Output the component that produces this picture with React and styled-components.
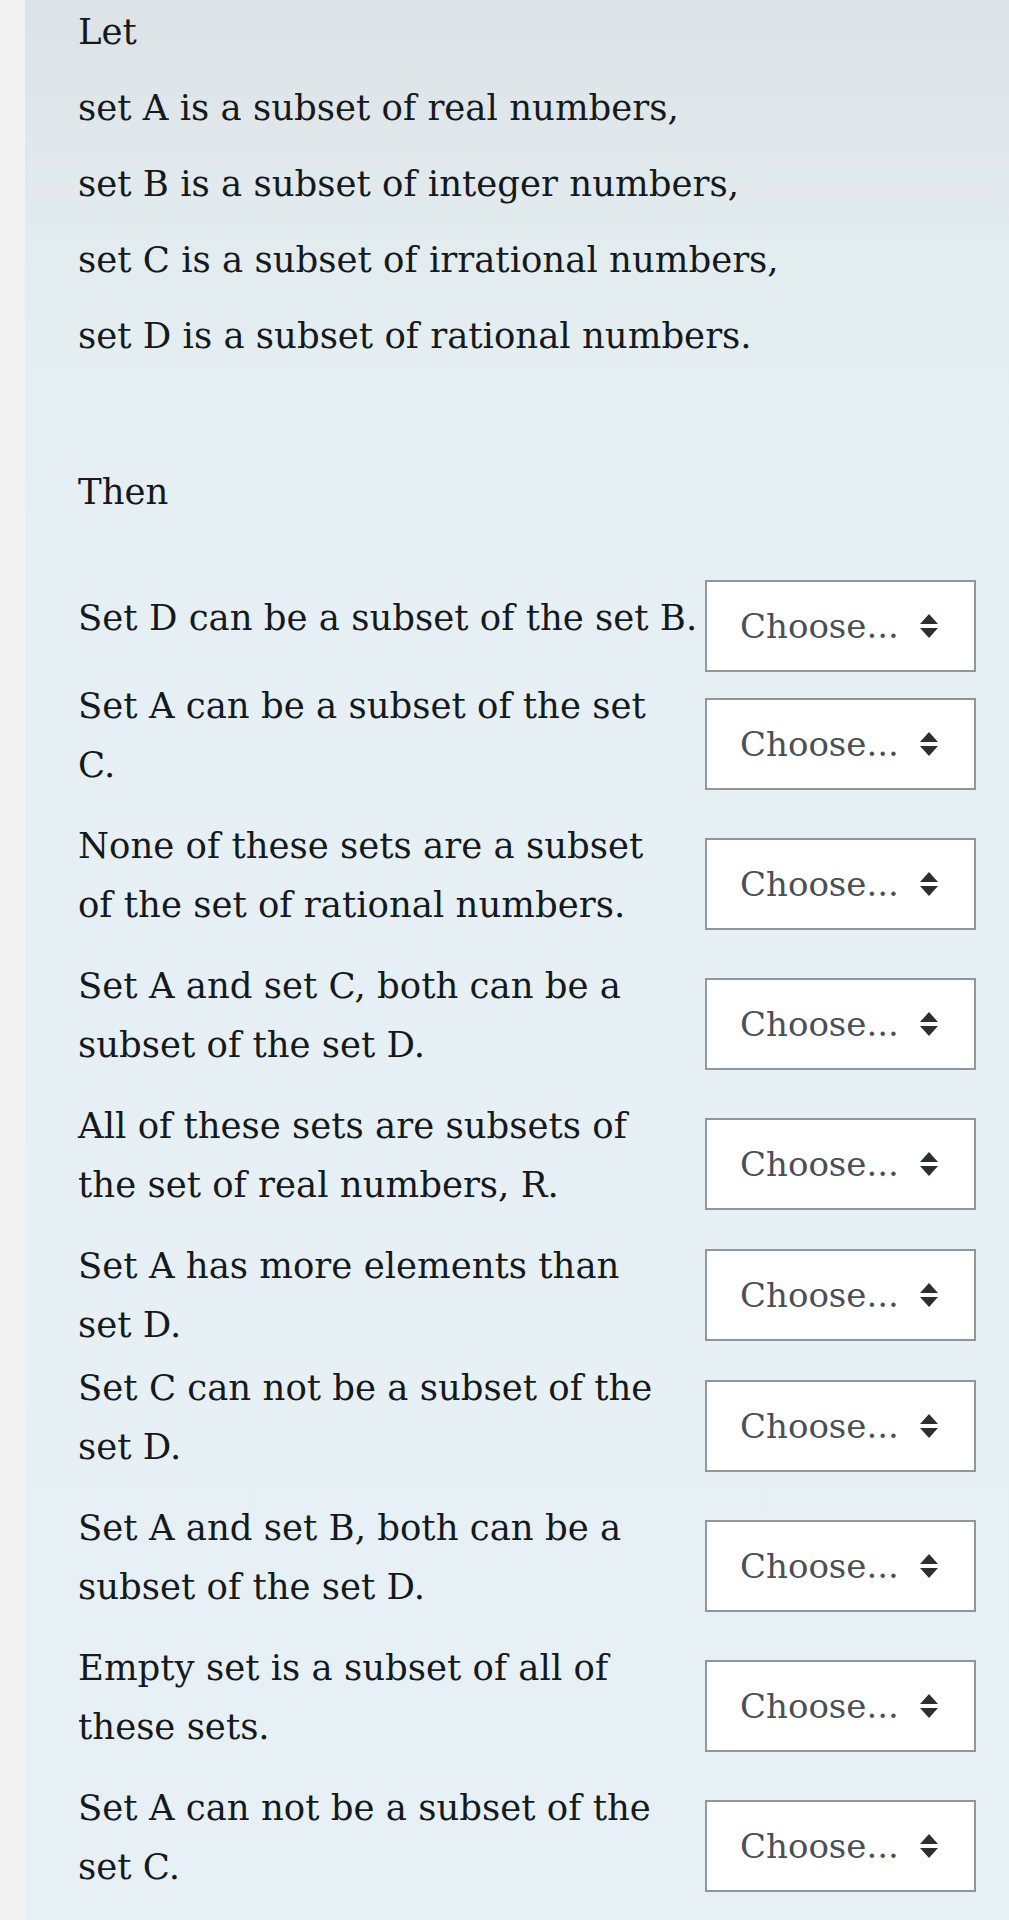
import React from "react";
import styled, { createGlobalStyle } from "styled-components";

const GlobalStyle = createGlobalStyle`
  html, body {
    margin: 0;
    padding: 0;
    background: #f3f3f3;
  }
  * {
    box-sizing: border-box;
  }
`;

const intro = [
  "set A is a subset of real numbers,",
  "set B is a subset of integer numbers,",
  "set C is a subset of irrational numbers,",
  "set D is a subset of rational numbers.",
];

const rows = [
  { lines: ["Set D can be a subset of the set B."] },
  { lines: ["Set A can be a subset of the set", "C."] },
  { lines: ["None of these sets are a subset", "of the set of rational numbers."] },
  { lines: ["Set A and set C, both can be a", "subset of the set D."] },
  { lines: ["All of these sets are subsets of", "the set of real numbers, R."] },
  { lines: ["Set A has more elements than", "set D."], flush: true },
  { lines: ["Set C can not be a subset of the", "set D."] },
  { lines: ["Set A and set B, both can be a", "subset of the set D."] },
  { lines: ["Empty set is a subset of all of", "these sets."] },
  { lines: ["Set A can not be a subset of the", "set C."] },
];

const Arrows = () => (
  <svg width="22" height="26" viewBox="0 0 22 26">
    <path d="M11 1 L20 11 L2 11 Z" fill="#2b2f33" />
    <path d="M11 25 L20 15 L2 15 Z" fill="#2b2f33" />
  </svg>
);

const App = () => {
  return (
    <>
      <GlobalStyle />
      <Page>
        <Panel>
          <Para>Let</Para>
          {intro.map((t, i) => (
            <Para key={i} last={i === intro.length - 1}>
              {t}
            </Para>
          ))}
          <Para>Then</Para>
          <Answers>
            {rows.map((r, i) => (
              <Row key={i}>
                <Prompt flush={r.flush}>
                  {r.lines.map((l, j) => (
                    <Line key={j}>{l}</Line>
                  ))}
                </Prompt>
                <Select>
                  <span>Choose...</span>
                  <Arrows />
                </Select>
              </Row>
            ))}
          </Answers>
        </Panel>
      </Page>
    </>
  );
};

const Page = styled.div`
  min-height: 1920px;
  padding-left: 25px;
  display: flex;
  font-family: "DejaVu Serif", "Liberation Serif", serif;
  color: #15191c;
`;

const Panel = styled.div`
  flex: 1;
  min-height: 1920px;
  padding: 2px 0 0 53px;
  background: linear-gradient(#dce3e6 0px, #e3ecef 260px, #e6f0f4 520px, #e7f1f5 100%);
`;

const Para = styled.p`
  margin: 0 0 ${(p) => (p.last ? "97px" : "17px")};
  font-size: 35.5px;
  line-height: 59px;
`;

const Answers = styled.div`
  margin-top: 59px;
  display: flex;
  flex-direction: column;
  gap: 4px;
`;

const Row = styled.div`
  display: grid;
  grid-template-columns: 627px 271px;
  align-items: center;
`;

const Prompt = styled.div`
  padding-bottom: ${(p) => (p.flush ? "0" : "18px")};
  font-size: 35.5px;
  line-height: 59px;
`;

const Line = styled.div`
  white-space: nowrap;
`;

const Select = styled.div`
  width: 271px;
  height: 92px;
  border: 2px solid #8f969c;
  background: #fff;
  display: flex;
  align-items: center;
  justify-content: space-between;
  padding: 0 34px 0 33px;
  font-size: 34px;
  color: #4a5056;
`;

export default App;
